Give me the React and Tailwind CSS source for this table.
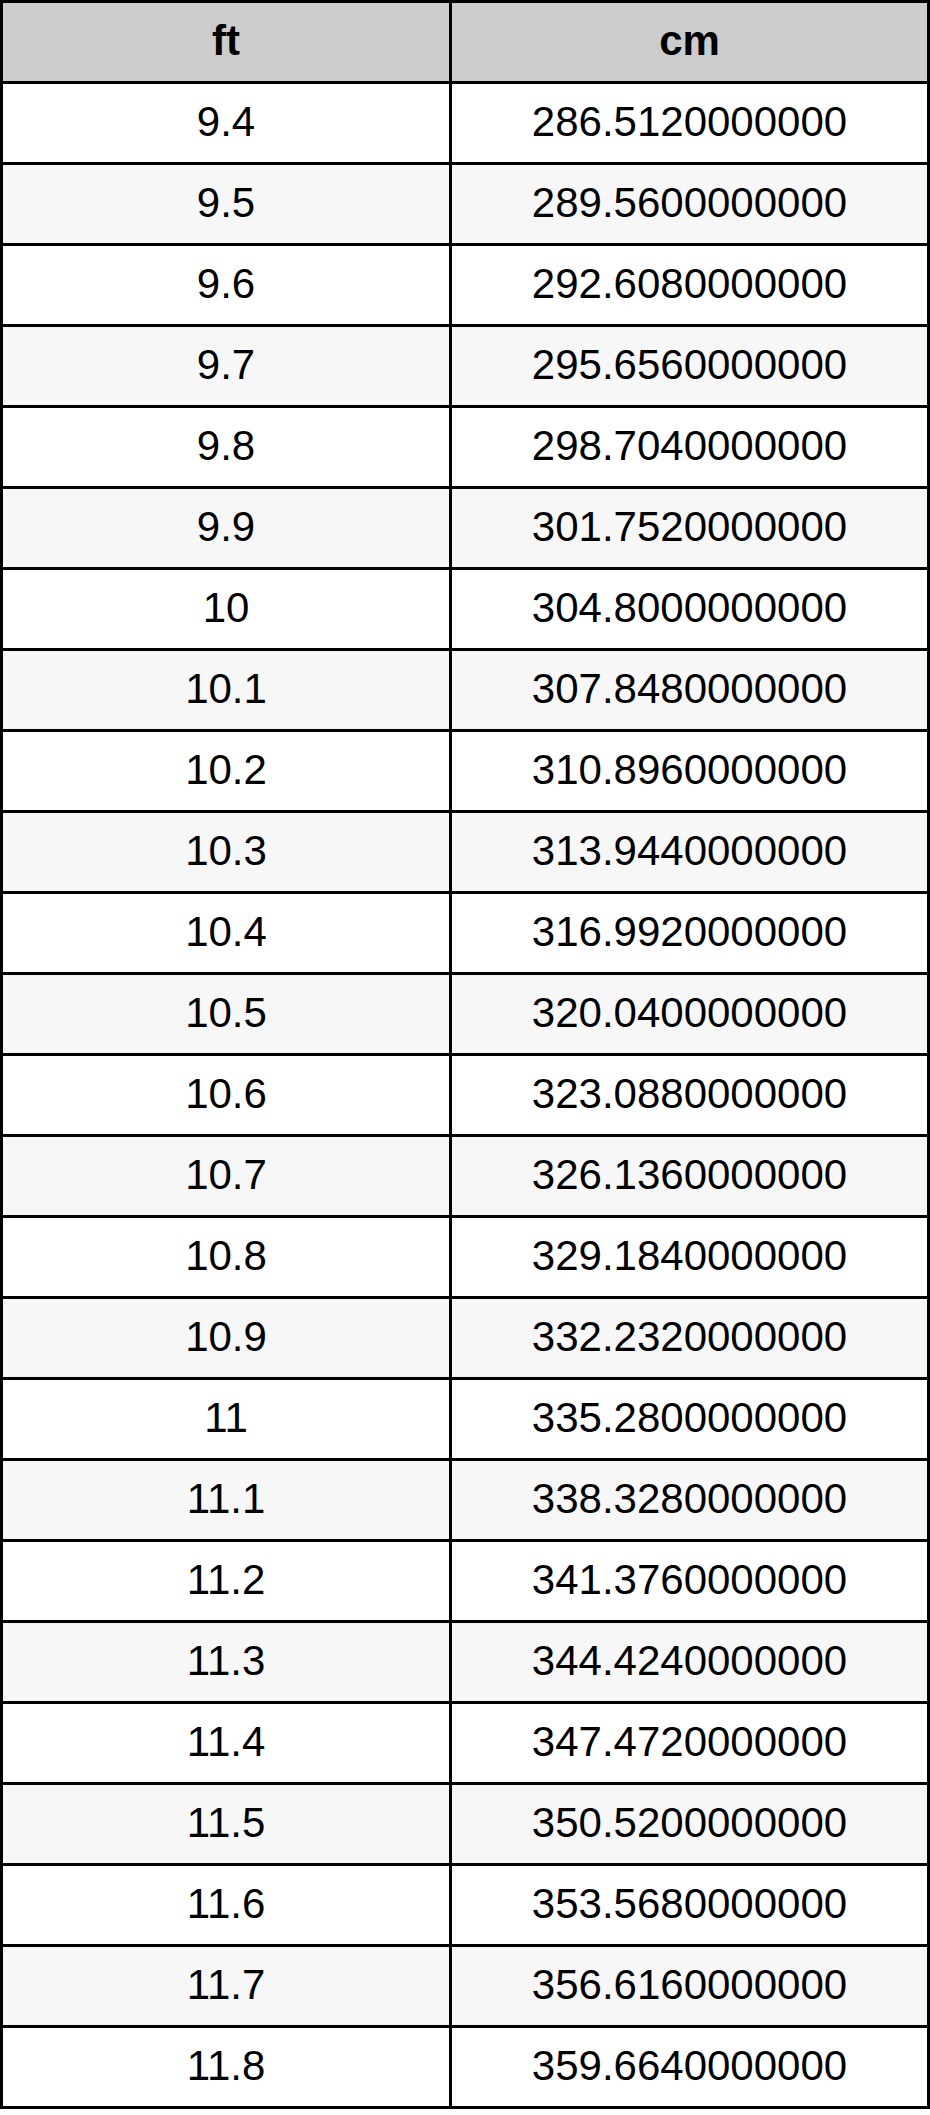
import React from 'react';

const rows = [
  ['9.4', '286.5120000000'],
  ['9.5', '289.5600000000'],
  ['9.6', '292.6080000000'],
  ['9.7', '295.6560000000'],
  ['9.8', '298.7040000000'],
  ['9.9', '301.7520000000'],
  ['10', '304.8000000000'],
  ['10.1', '307.8480000000'],
  ['10.2', '310.8960000000'],
  ['10.3', '313.9440000000'],
  ['10.4', '316.9920000000'],
  ['10.5', '320.0400000000'],
  ['10.6', '323.0880000000'],
  ['10.7', '326.1360000000'],
  ['10.8', '329.1840000000'],
  ['10.9', '332.2320000000'],
  ['11', '335.2800000000'],
  ['11.1', '338.3280000000'],
  ['11.2', '341.3760000000'],
  ['11.3', '344.4240000000'],
  ['11.4', '347.4720000000'],
  ['11.5', '350.5200000000'],
  ['11.6', '353.5680000000'],
  ['11.7', '356.6160000000'],
  ['11.8', '359.6640000000'],
];

export default function App() {
  return (
    <div className="w-[930px] bg-white font-['Liberation_Sans',Arial,sans-serif] text-black">
      {/* black background shows through the gaps as the grid lines */}
      <div className="grid grid-cols-[446px_475px] gap-[3px] bg-black p-[3px]">
        <div className="h-[78px] bg-[#cccccc] flex items-center justify-center pb-[3px] text-[42px] font-bold">ft</div>
        <div className="h-[78px] bg-[#cccccc] flex items-center justify-center pb-[3px] text-[42px] font-bold">cm</div>
        {rows.map(([ft, cm], i) => {
          const bg = i % 2 === 0 ? 'bg-white' : 'bg-[#f7f7f7]';
          return (
            <React.Fragment key={ft}>
              <div className={`h-[78px] ${bg} flex items-center justify-center pb-[4px] text-[42px]`}>{ft}</div>
              <div className={`h-[78px] ${bg} flex items-center justify-center pb-[4px] text-[42px]`}>{cm}</div>
            </React.Fragment>
          );
        })}
      </div>
    </div>
  );
}
